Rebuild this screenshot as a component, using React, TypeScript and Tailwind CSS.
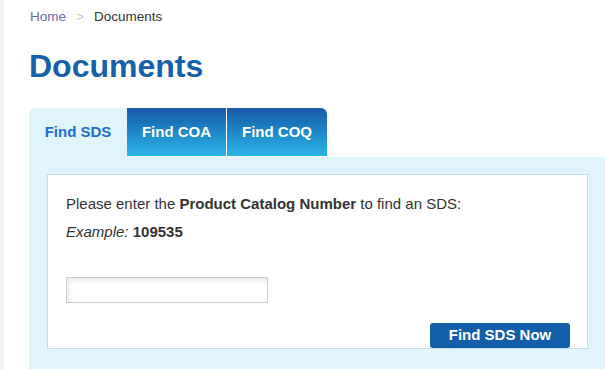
import React from "react";

const tabs = [
  { label: "Find SDS", active: true },
  { label: "Find COA", active: false },
  { label: "Find COQ", active: false },
];

export default function App() {
  return (
    <div className="flex min-h-[369px] bg-white font-['Liberation_Sans',Arial,sans-serif]">
      <div className="w-1 shrink-0 bg-[#f2f2f2]" />
      <div className="flex flex-1 flex-col pl-[25px]">
        {/* breadcrumb */}
        <nav className="mt-2 ml-px flex items-center text-[13.5px] leading-[18px]">
          <a className="text-[#6a6ab2]">Home</a>
          <span className="mx-[10px] text-[#c4c4c4]">&gt;</span>
          <span className="text-[#333]">Documents</span>
        </nav>

        <h1 className="mt-6 text-[32px] font-bold leading-8 text-[#1660aa]">Documents</h1>

        {/* tabs */}
        <div className="mt-[26px] flex h-[49px] items-start">
          {tabs.map((t, i) =>
            t.active ? (
              <div
                key={t.label}
                className="flex h-[49px] w-[98px] items-center justify-center rounded-tl-md bg-[#dff4fb] pb-px text-[15px] font-bold text-[#1c6fcb]"
              >
                {t.label}
              </div>
            ) : (
              <div
                key={t.label}
                className={
                  "flex h-12 items-center justify-center bg-linear-to-b from-[#185aa7] to-[#2bb6e8] text-[15px] font-bold text-white " +
                  (i === 1 ? "w-[100px] border-r border-white" : "w-[100px] rounded-tr-md")
                }
              >
                {t.label}
              </div>
            )
          )}
        </div>

        {/* panel */}
        <div className="flex-1 bg-[#dff4fb] pt-[17px] pr-[17px] pb-[21px] pl-[18px]">
          <div className="flex flex-col border border-[#c5dde6] bg-white">
            <div className="pt-[15px] pl-[18px] text-[15px] leading-7 text-[#333]">
              <p>
                Please enter the <b>Product Catalog Number</b> to find an SDS:
              </p>
              <p>
                <i>Example:</i> <b>109535</b>
              </p>
              <input
                type="text"
                className="mt-[31px] block h-[26px] w-[202px] border border-[#cccccc] bg-white shadow-[inset_3px_3px_4px_rgba(0,0,0,0.08)] outline-none"
              />
            </div>
            <div className="mt-5 flex justify-end pr-[17px]">
              <button className="h-[25px] w-[140px] rounded-[3px] bg-[#135ea8] text-[15px] font-bold text-white">
                Find SDS Now
              </button>
            </div>
          </div>
        </div>
      </div>
    </div>
  );
}
